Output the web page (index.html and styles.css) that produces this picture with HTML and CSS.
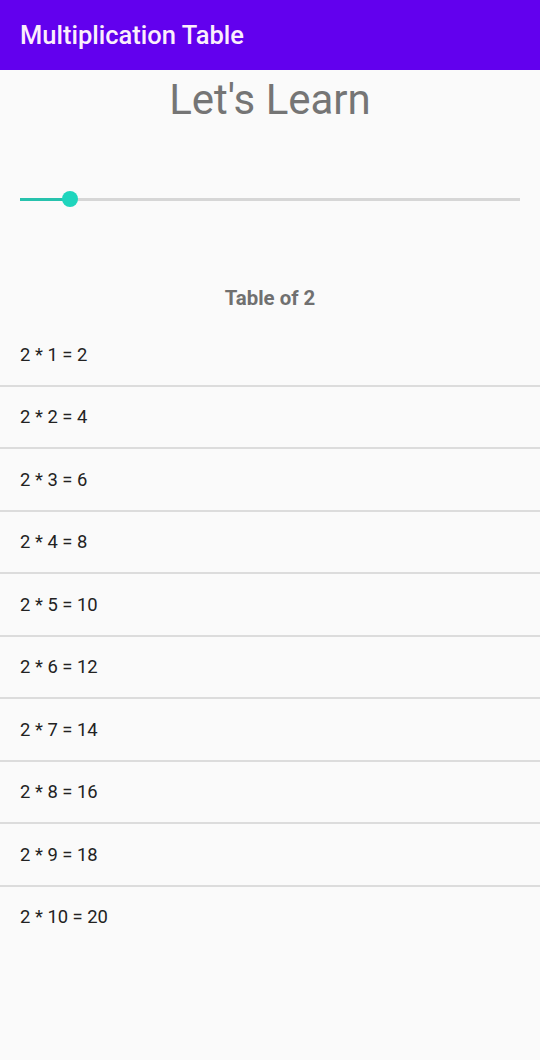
FILE: index.html
```html
<!DOCTYPE html>
<html>
<head>
<meta charset="utf-8">
<link rel="stylesheet" href="styles.css">
</head>
<body>
<header class="appbar"><h1 class="appbar-title">Multiplication Table</h1></header>
<main class="content">
  <h2 class="heading">Let's Learn</h2>
  <div class="slider">
    <div class="track"><div class="track-active"></div><div class="thumb"></div></div>
  </div>
  <h3 class="subheading">Table of 2</h3>
  <ul class="list">
    <li class="row">2 * 1 = 2</li>
    <li class="row">2 * 2 = 4</li>
    <li class="row">2 * 3 = 6</li>
    <li class="row">2 * 4 = 8</li>
    <li class="row">2 * 5 = 10</li>
    <li class="row">2 * 6 = 12</li>
    <li class="row">2 * 7 = 14</li>
    <li class="row">2 * 8 = 16</li>
    <li class="row">2 * 9 = 18</li>
    <li class="row">2 * 10 = 20</li>
  </ul>
</main>
</body>
</html>
```
FILE: styles.css
```css
html, body {
  margin: 0;
  padding: 0;
  background: #fafafa;
  font-family: Roboto, "Liberation Sans", sans-serif;
}
.appbar {
  height: 70px;
  background: #6200ee;
  display: flex;
  align-items: center;
  padding: 0 20px;
  box-sizing: border-box;
}
.appbar-title {
  margin: 0;
  color: #fbeefc;
  font-size: 25.5px;
  font-weight: 500;
  letter-spacing: 0;
}
.content {
  display: flex;
  flex-direction: column;
}
.heading {
  margin: 7px 0 0;
  text-align: center;
  font-size: 42px;
  font-weight: 400;
  line-height: 46px;
  color: #757575;
}
.slider {
  padding: 0 20px 0 20px;
  margin-top: 61px;
  height: 30px;
  display: flex;
  align-items: center;
}
.track {
  position: relative;
  flex: 1;
  height: 3px;
  background: #d6d6d6;
}
.track-active {
  width: 50px;
  height: 100%;
  background: #27c2ad;
}
.thumb {
  position: absolute;
  left: 42px;
  top: -6.5px;
  width: 16px;
  height: 16px;
  border-radius: 50%;
  background: #1fd5bd;
}
.subheading {
  margin: 72px 0 0;
  text-align: center;
  font-size: 20.4px;
  font-weight: 700;
  line-height: 24px;
  color: #707070;
}
.list {
  list-style: none;
  margin: 14px 0 0;
  padding: 0;
}
.row {
  height: 60.5px;
  display: flex;
  align-items: center;
  padding: 0 20px;
  font-size: 18.4px;
  color: #222;
  border-bottom: 2px solid #dcdcdc;
}
.row:last-child {
  border-bottom: none;
}
```
